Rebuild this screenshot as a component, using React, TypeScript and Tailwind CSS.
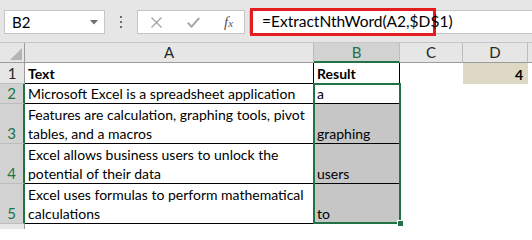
import React from "react";

const HDR = "bg-[#e6e6e6]";
const SEL_HDR = "bg-[#d2d2d2]";

function RowHead({ n, sel, h }: { n?: string; sel?: boolean; h?: string }) {
  return (
    <div
      className={`flex items-end justify-center pb-[1px] border-b border-[#bdbdbd] text-[15px] leading-[18px] ${
        sel ? "bg-[#d2d2d2] text-[#217346] border-r-2 border-r-[#217346]" : "bg-[#e6e6e6] text-[#262626] border-r border-r-[#9b9b9b]"
      } ${h ?? ""}`}
    >
      {n}
    </div>
  );
}

function TextCell({ children, bold, right, extra }: { children?: React.ReactNode; bold?: boolean; right?: boolean; extra?: string }) {
  return (
    <div
      className={`flex flex-col justify-end pl-[3px] pr-[3px] text-[14px] leading-[19px] text-black whitespace-nowrap overflow-hidden ${
        bold ? "font-bold" : ""
      } ${right ? "items-end" : ""} ${extra ?? ""}`}
    >
      {children}
    </div>
  );
}

export default function App() {
  return (
    <div className="w-[532px] h-[229px] overflow-hidden bg-white font-[Lato,sans-serif] select-none">
      {/* toolbar */}
      <div className="h-[43px] bg-[#e6e6e6] border-b border-[#c6c6c6] flex items-start pl-[4px] pt-[10px]">
        <div className="w-[101px] h-[24px] bg-white border border-[#c6c6c6] flex items-center justify-between pl-[7px] pr-[6px] text-[15px] text-black">
          <span>B2</span>
          <svg width="8" height="5" viewBox="0 0 8 5">
            <path d="M0 0 H8 L4 4.5 Z" fill="#6d6d6d" />
          </svg>
        </div>
        <div className="w-[32px] h-[24px] flex flex-col items-center justify-center gap-[3px]">
          <span className="w-[2px] h-[2px] bg-[#6d6d6d]" />
          <span className="w-[2px] h-[2px] bg-[#6d6d6d]" />
          <span className="w-[2px] h-[2px] bg-[#6d6d6d]" />
        </div>
        <div className="w-[108px] h-[24px] bg-white border border-[#c6c6c6] flex items-center pl-[13px]">
          <svg width="11" height="11" viewBox="0 0 11 11" className="mr-[25px]">
            <path d="M0.5 0.5 L10.5 10.5 M10.5 0.5 L0.5 10.5" stroke="#a6a6a6" strokeWidth="1.4" />
          </svg>
          <svg width="13" height="11" viewBox="0 0 13 11" className="mr-[24px]">
            <path d="M0.8 5.8 L4.6 9.6 L12.2 1" stroke="#a6a6a6" strokeWidth="2" fill="none" />
          </svg>
          <span className="font-['Liberation_Serif',serif] italic text-[15px] text-[#555] leading-none">
            f<span className="text-[11px]">x</span>
          </span>
        </div>
        <div className="relative ml-[4px] flex-1 h-[24px] bg-white border-y border-l border-[#c6c6c6]">
          <div className="absolute left-0 top-[-3px] w-[186px] h-[28px] border-[3px] border-[#e41d22] flex items-center pl-[9px] text-[15.5px] text-black whitespace-nowrap">
            =ExtractNthWord(A2,$D$1)
          </div>
        </div>
      </div>

      {/* sheet grid */}
      <div className="relative">
        <div className="grid grid-cols-[25px_289px_86px_63px_65px_4px] grid-rows-[20px_21px_20px_40px_40px_40px_5px]">
          {/* header row */}
          <div className={`${HDR} border-r border-b border-[#9b9b9b] flex items-end justify-end pr-[2px] pb-[2px]`}>
            <svg width="12" height="12" viewBox="0 0 12 12">
              <path d="M12 0 L12 12 L0 12 Z" fill="#b4b4b4" />
            </svg>
          </div>
          <div className={`${HDR} border-r border-b border-[#bdbdbd] border-b-[#9b9b9b] flex items-center justify-center text-[15px] text-[#262626]`}>A</div>
          <div className={`${SEL_HDR} border-r border-[#bdbdbd] border-b-2 border-b-[#217346] flex items-center justify-center text-[15px] text-[#217346]`}>B</div>
          <div className={`${HDR} border-r border-b border-[#bdbdbd] border-b-[#9b9b9b] flex items-center justify-center text-[15px] text-[#262626]`}>C</div>
          <div className={`${HDR} border-r border-b border-[#bdbdbd] border-b-[#9b9b9b] flex items-center justify-center text-[15px] text-[#262626]`}>D</div>
          <div className={`${HDR} border-b border-[#9b9b9b]`} />

          {/* row 1 */}
          <RowHead n="1" />
          <TextCell bold extra="border-r border-b border-black">Text</TextCell>
          <TextCell bold extra="border-r border-b border-black">Result</TextCell>
          <div />
          <TextCell bold right extra="bg-[#ddd9c4] pr-[5px]">4</TextCell>
          <div />

          {/* row 2 */}
          <RowHead n="2" sel />
          <TextCell extra="border-r border-b border-black">Microsoft Excel is a spreadsheet application</TextCell>
          <TextCell extra="border-r border-b border-black">a</TextCell>
          <div />
          <div />
          <div />

          {/* row 3 */}
          <RowHead n="3" sel />
          <TextCell extra="border-r border-b border-black">
            <span>Features are calculation, graphing tools, pivot</span>
            <span>tables, and a macros</span>
          </TextCell>
          <TextCell extra="border-r border-b border-black bg-[#c6c6c6]">graphing</TextCell>
          <div />
          <div />
          <div />

          {/* row 4 */}
          <RowHead n="4" sel />
          <TextCell extra="border-r border-b border-black">
            <span>Excel allows business users to unlock the</span>
            <span>potential of their data</span>
          </TextCell>
          <TextCell extra="border-r border-b border-black bg-[#c6c6c6]">users</TextCell>
          <div />
          <div />
          <div />

          {/* row 5 */}
          <RowHead n="5" sel />
          <TextCell extra="border-r border-b border-black">
            <span>Excel uses formulas to perform mathematical</span>
            <span>calculations</span>
          </TextCell>
          <TextCell extra="border-r border-b border-black bg-[#c6c6c6]">to</TextCell>
          <div />
          <div />
          <div />

          {/* row 6 (partial) */}
          <div className="bg-[#e6e6e6] border-r border-[#9b9b9b]" />
          <div />
          <div />
          <div />
          <div />
          <div />
        </div>

        {/* selection overlay B2:B5 */}
        <div className="absolute left-[313px] top-[40px] w-[88px] h-[141px] border-2 border-[#217346] pointer-events-none">
          <div className="absolute right-[-5px] bottom-[-5px] w-[7px] h-[7px] bg-[#217346] border border-white" />
        </div>
      </div>
    </div>
  );
}
